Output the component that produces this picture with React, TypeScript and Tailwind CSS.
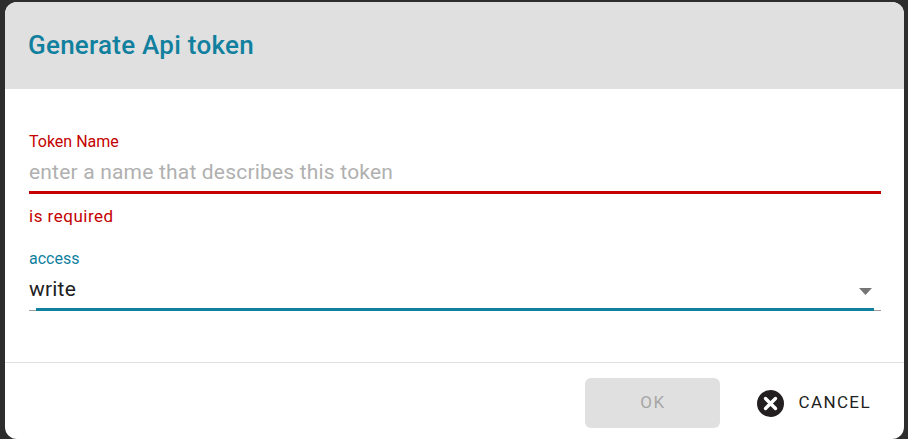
export default function App() {
  return (
    <div className="h-[439px] w-[908px] overflow-hidden bg-[#2d2d2d] pt-[2px] pl-[5px] pr-[4px] font-['Roboto',sans-serif]">
      <div className="flex h-[437px] flex-col overflow-hidden rounded-[12px] bg-white">
        <div className="flex h-[87px] shrink-0 items-center bg-[#e0e0e0] pb-[2px] pl-[23px]">
          <h2 className="text-[26px] font-medium leading-[32px] tracking-[0.25px] text-[#11809f]">Generate Api token</h2>
        </div>

        <div className="flex h-[273px] shrink-0 flex-col pl-[24px] pr-[23px] pt-[43px]">
          <label className="text-[16px] leading-[20px] text-[#c40000]">Token Name</label>
          <input
            placeholder="enter a name that describes this token"
            className="h-[42px] w-full border-b-[3px] border-[#c40000] bg-transparent pt-[1px] text-[21px] tracking-[0.19px] outline-none placeholder:text-[#b0b0b0]"
          />
          <p className="mt-[12px] text-[17px] leading-[20px] tracking-[0.5px] text-[#c40000]">is required</p>

          <label className="mt-[23px] text-[16px] leading-[20px] text-[#11809f]">access</label>
          <div className="relative flex h-[42px] items-center border-b border-[#9e9e9e]">
            <span className="text-[21px] tracking-[0.19px] text-[#212121]">write</span>
            <svg viewBox="0 0 13 7" className="absolute right-[9px] top-[19px] h-[7px] w-[13px]">
              <path d="M0 0h13L6.5 7z" fill="#757575" />
            </svg>
            <div className="absolute -bottom-[1px] left-[7px] right-[7px] h-[3px] bg-[#11809f]" />
          </div>
        </div>

        <div className="flex flex-1 items-start justify-end gap-[37px] border-t border-[#e0e0e0] pt-[15px] pr-[33px]">
          <button className="h-[50px] w-[135px] rounded-[6px] bg-[#e0e0e0] text-[17px] tracking-[1.4px] text-[#a6a6a6]">OK</button>
          <button className="flex h-[50px] items-center gap-[14px] text-[17px] tracking-[1.4px] text-[#231f20]">
            <svg viewBox="0 0 27 27" className="h-[27px] w-[27px]">
              <circle cx="13.5" cy="13.5" r="13.5" fill="#231f20" />
              <path d="M8.5 8.5l10 10M18.5 8.5l-10 10" stroke="#fff" strokeWidth="3.4" strokeLinecap="round" />
            </svg>
            CANCEL
          </button>
        </div>
      </div>
    </div>
  );
}
